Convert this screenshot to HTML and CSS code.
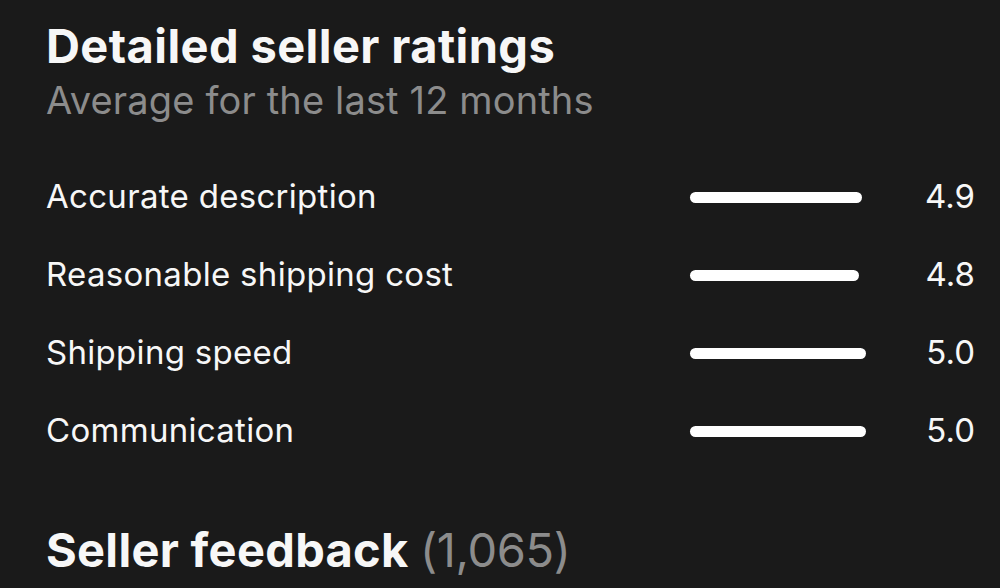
FILE: index.html
```html
<!DOCTYPE html>
<html lang="en">
<head>
<meta charset="utf-8">
<link rel="stylesheet" href="styles.css">
</head>
<body>
<main class="panel">
  <section class="ratings">
    <h2 class="title">Detailed seller ratings</h2>
    <p class="subtitle">Average for the last 12 months</p>
    <ul class="rows">
      <li class="row"><span class="label">Accurate description</span><span class="track"><span class="bar" style="width:98%"></span></span><span class="value">4.9</span></li>
      <li class="row"><span class="label">Reasonable shipping cost</span><span class="track"><span class="bar" style="width:96%"></span></span><span class="value">4.8</span></li>
      <li class="row"><span class="label">Shipping speed</span><span class="track"><span class="bar" style="width:100%"></span></span><span class="value">5.0</span></li>
      <li class="row"><span class="label">Communication</span><span class="track"><span class="bar" style="width:100%"></span></span><span class="value">5.0</span></li>
    </ul>
  </section>
  <h2 class="feedback">Seller feedback <span class="count">(1,065)</span></h2>
</main>
</body>
</html>
```
FILE: styles.css
```css
html, body {
  margin: 0;
  padding: 0;
  background: #1a1a1a;
  height: 100%;
  overflow: hidden;
}
body {
  font-family: Inter, "Noto Sans", sans-serif;
  color: #f7f7f7;
}
.panel {
  padding: 20px 25px 0 46px;
}
.title {
  margin: 0;
  font-size: 47px;
  font-weight: 700;
  line-height: 52px;
  letter-spacing: 0.4px;
}
.subtitle {
  margin: 5px 0 0;
  font-size: 38px;
  line-height: 46px;
  color: #8c8c8c;
  letter-spacing: 0.15px;
}
.rows {
  list-style: none;
  margin: 34px 0 0;
  padding: 0;
}
.row {
  display: grid;
  grid-template-columns: 1fr 176px 109px;
  align-items: center;
  height: 78px;
}
.label {
  font-size: 33px;
  letter-spacing: 0.3px;
}
.track {
  display: block;
  height: 11px;
  margin-top: 2px;
}
.bar {
  display: block;
  height: 11px;
  border-radius: 6px;
  background: #ffffff;
}
.value {
  font-size: 33px;
  text-align: right;
}
.feedback {
  margin: 55px 0 0;
  font-size: 47px;
  font-weight: 700;
  line-height: 52px;
  letter-spacing: 0.3px;
}
.count {
  font-weight: 400;
  color: #8c8c8c;
  letter-spacing: -0.4px;
}
```
